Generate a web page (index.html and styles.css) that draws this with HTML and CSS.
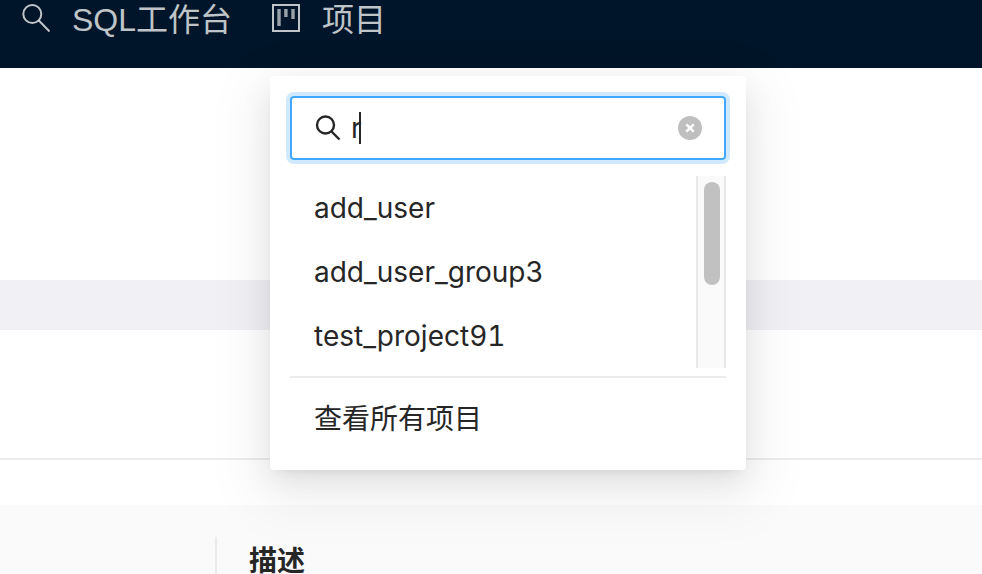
FILE: index.html
```html
<!DOCTYPE html>
<html lang="zh-CN">
<head>
<meta charset="utf-8">
<title>项目</title>
<link rel="stylesheet" href="styles.css">
</head>
<body>
<header class="topbar">
  <nav class="menu">
    <a class="menu-item">
      <svg class="menu-icon" width="28" height="28" viewBox="0 0 28 28"><circle cx="10.300" cy="10" r="9"/><path d="M16.800 16.500L27.500 27.500"/></svg>
      <span class="menu-label">SQL工作台</span>
    </a>
    <a class="menu-item">
      <svg class="menu-icon" width="28" height="28" viewBox="0 0 28 28"><rect x="1" y="1" width="26" height="26"/><rect class="bar" x="5.300" y="5" width="3.400" height="17"/><rect class="bar" x="12.200" y="5" width="3.400" height="8"/><rect class="bar" x="19.300" y="5" width="3.400" height="10"/></svg>
      <span class="menu-label">项目</span>
    </a>
  </nav>
</header>
<main class="page">
  <div class="band"></div>
  <div class="rule"></div>
  <div class="table-head">
    <div class="cell-first"></div>
    <div class="cell-title">描述</div>
  </div>
</main>
<section class="dropdown">
  <div class="search">
    <svg class="search-icon" width="26" height="26" viewBox="0 0 26 26"><circle cx="10.500" cy="10" r="8.500"/><path d="M16.500 16.500l8 8"/></svg>
    <span class="search-value">r</span>
    <span class="caret"></span>
    <svg class="clear" width="24" height="24" viewBox="0 0 24 24"><circle cx="12" cy="12" r="12"/><path d="M8.300 8.300l7.400 7.400M15.700 8.300l-7.400 7.400"/></svg>
  </div>
  <div class="list-wrap">
    <ul class="list">
      <li>add_user</li>
      <li>add_user_group3</li>
      <li>test_project91</li>
    </ul>
    <div class="scrollbar"><div class="thumb"></div></div>
  </div>
  <div class="divider"></div>
  <a class="view-all">查看所有项目</a>
</section>
</body>
</html>
```
FILE: styles.css
```css
html, body {
  margin: 0;
  height: 100%;
  overflow: hidden;
  background: #fff;
  font-family: Inter, "Noto Sans CJK SC", sans-serif;
}
.topbar {
  height: 68px;
  background: #001529;
  box-sizing: border-box;
  padding-left: 22px;
}
.menu {
  display: flex;
  gap: 40px;
}
.menu-item {
  display: flex;
  align-items: center;
  gap: 22px;
  height: 36px;
  color: rgba(255, 255, 255, 0.75);
  font-family: "Liberation Sans", "Noto Sans CJK SC", sans-serif;
  font-size: 32px;
  line-height: 36px;
}
.menu-label {
  margin-top: 4px;
}
.menu-icon {
  flex: none;
  fill: none;
  stroke: rgba(255, 255, 255, 0.75);
  stroke-width: 2;
}
.menu-icon .bar {
  fill: rgba(255, 255, 255, 0.6);
  stroke: none;
}
.page {
  padding-top: 212px;
}
.band {
  height: 50px;
  background: #f0f0f5;
}
.rule {
  height: 2px;
  margin-top: 128px;
  background: #ececec;
}
.table-head {
  display: flex;
  align-items: flex-start;
  height: 69px;
  margin-top: 45px;
  padding-top: 32px;
  box-sizing: border-box;
  background: #fafafa;
}
.cell-first {
  width: 215px;
  height: 37px;
  border-right: 2px solid #eaeaea;
}
.cell-title {
  margin-left: 32px;
  margin-top: 6px;
  font-size: 28px;
  line-height: 36px;
  font-weight: 600;
  color: #262626;
}
.dropdown {
  position: absolute;
  left: 270px;
  top: 76px;
  width: 476px;
  height: 394px;
  box-sizing: border-box;
  padding: 20px 20px 0;
  background: #fff;
  border-radius: 4px;
  box-shadow: 0 6px 12px -8px rgba(0, 0, 0, 0.12), 0 12px 32px rgba(0, 0, 0, 0.08), 0 18px 56px 16px rgba(0, 0, 0, 0.05);
}
.search {
  display: flex;
  align-items: center;
  height: 64px;
  box-sizing: border-box;
  padding: 0 22px 0 23px;
  border: 2px solid #40a9ff;
  border-radius: 4px;
  box-shadow: 0 0 0 4px rgba(24, 144, 255, 0.2);
}
.search-icon {
  flex: none;
  fill: none;
  stroke: #262626;
  stroke-width: 2.400;
}
.search-value {
  margin-left: 10px;
  font-size: 28px;
  line-height: 36px;
  color: #262626;
}
.caret {
  width: 2px;
  height: 32px;
  margin-left: -3px;
  background: #262626;
}
.clear {
  margin-left: auto;
}
.clear circle {
  fill: #bfbfbf;
}
.clear path {
  fill: none;
  stroke: #fff;
  stroke-width: 2.400;
}
.list-wrap {
  display: flex;
  justify-content: space-between;
  height: 192px;
  margin-top: 16px;
}
.list {
  margin: 0;
  padding: 0 0 0 24px;
  list-style: none;
}
.list li {
  height: 64px;
  font-size: 28px;
  font-variant-numeric: tabular-nums;
  line-height: 64px;
  color: #262626;
}
.scrollbar {
  width: 30px;
  height: 192px;
  box-sizing: border-box;
  padding: 6px 6px 0;
  background: #fafafa;
  border: solid #e8e8e8;
  border-width: 0 2px;
}
.thumb {
  width: 16px;
  height: 103px;
  background: #c1c1c1;
  border-radius: 8px;
}
.divider {
  height: 2px;
  margin-top: 8px;
  background: #ececec;
}
.view-all {
  display: block;
  margin-top: 23px;
  padding-left: 24px;
  font-size: 28px;
  line-height: 36px;
  color: #262626;
}
```
